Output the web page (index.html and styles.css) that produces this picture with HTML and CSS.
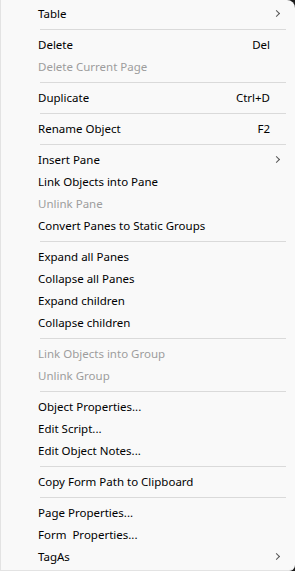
FILE: index.html
```html
<!DOCTYPE html>
<html lang="en">

<head>
    <meta charset="UTF-8">
    <title>Context menu</title>
    <link rel="stylesheet" href="styles.css">
</head>

<body>

    <ul class="menu">
        <li class="item">Table<span class="arrow"></span></li>
        <li class="sep"></li>
        <li class="item">Delete<span class="key">Del</span></li>
        <li class="item off">Delete Current Page</li>
        <li class="sep"></li>
        <li class="item">Duplicate<span class="key">Ctrl+D</span></li>
        <li class="sep"></li>
        <li class="item">Rename Object<span class="key">F2</span></li>
        <li class="sep"></li>
        <li class="item">Insert Pane<span class="arrow"></span></li>
        <li class="item">Link Objects into Pane</li>
        <li class="item off">Unlink Pane</li>
        <li class="item">Convert Panes to Static Groups</li>
        <li class="sep"></li>
        <li class="item">Expand all Panes</li>
        <li class="item">Collapse all Panes</li>
        <li class="item">Expand children</li>
        <li class="item">Collapse children</li>
        <li class="sep"></li>
        <li class="item off">Link Objects into Group</li>
        <li class="item off">Unlink Group</li>
        <li class="sep"></li>
        <li class="item">Object Properties...</li>
        <li class="item">Edit Script...</li>
        <li class="item">Edit Object Notes...</li>
        <li class="sep"></li>
        <li class="item">Copy Form Path to Clipboard</li>
        <li class="sep"></li>
        <li class="item">Page Properties...</li>
        <li class="item">Form&nbsp; Properties...</li>
        <li class="item">TagAs<span class="arrow"></span></li>
    </ul>

</body>

</html>
```

FILE: styles.css
```css
html,
body {
    margin: 0;
    padding: 0;
    background-color: #1c1c1c;
}

.menu {
    box-sizing: border-box;
    width: 295px;
    height: 571px;
    margin: 0;
    padding: 3px 0 0 0;
    list-style: none;
    background-color: #f9f9f9;
    border-left: 1px solid #e3e3e3;
    border-bottom: 1px solid #e3e3e3;
    border-radius: 0 8px 6px 0;
    font-family: "Noto Sans", sans-serif;
    font-size: 11.5px;
    color: #000;
}

.item {
    box-sizing: border-box;
    display: flex;
    align-items: center;
    height: 22px;
    padding: 0 25px 2px 37px;
    white-space: pre;
    position: relative;
}

.off {
    color: #9d9d9d;
}

.key {
    margin-left: auto;
}

.arrow {
    position: absolute;
    right: 16px;
    top: 8px;
    width: 4px;
    height: 4px;
    border-top: 1px solid #555;
    border-right: 1px solid #555;
    transform: rotate(45deg);
}

.sep {
    height: 9px;
    display: flex;
    align-items: center;
    padding: 0 9px 0 39px;
}

.sep::after {
    content: "";
    flex: 1;
    height: 1px;
    background-color: #dadada;
}
```
